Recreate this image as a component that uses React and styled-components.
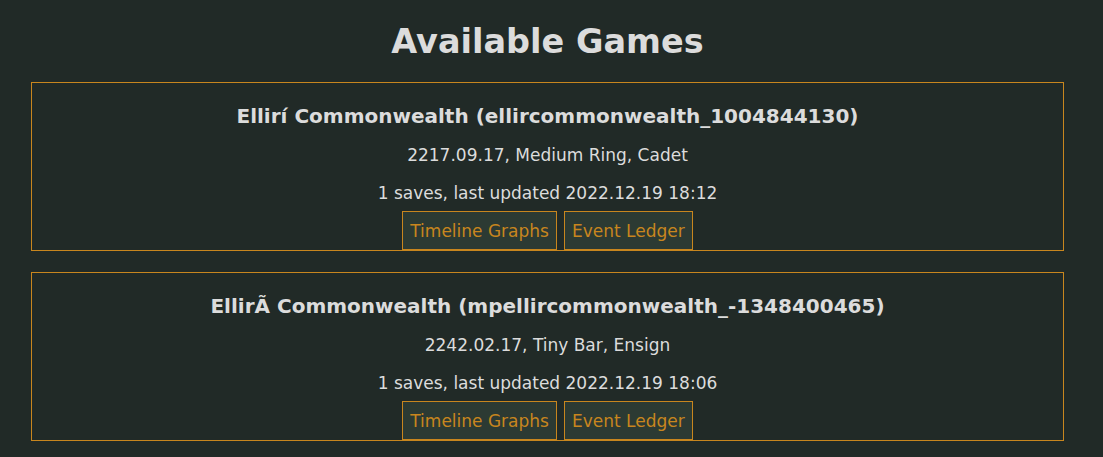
import React from "react";
import styled, { createGlobalStyle } from "styled-components";

const Global = createGlobalStyle`
  html, body { margin: 0; padding: 0; background: #212a27; }
  body { font-family: "DejaVu Sans", Verdana, sans-serif; color: #dcdcdc; }
`;

const Page = styled.div`
  padding: 0 39px 0 31px;
`;

const Title = styled.h1`
  margin: 0;
  padding: 22px 0 20px;
  text-align: center;
  font-family: "DejaVu Sans", Verdana, sans-serif;
  font-weight: bold;
  font-size: 33.5px;
  line-height: 40px;
  color: #dcdcdc;
`;

const List = styled.div`
  display: flex;
  flex-direction: column;
  gap: 21px;
`;

const Card = styled.div`
  border: 1px solid #c8861e;
  box-sizing: border-box;
  height: 169px;
  display: flex;
  flex-direction: column;
  align-items: center;
  padding-top: 20px;
`;

const CardTitle = styled.h2`
  margin: 0;
  font-size: 20px;
  line-height: 26px;
  font-weight: bold;
`;

const Info = styled.p`
  margin: ${(p) => p.$top}px 0 0;
  font-size: 17px;
  line-height: 20px;
`;

const Buttons = styled.div`
  display: flex;
  gap: 7px;
  margin-top: 8px;
`;

const Button = styled.button`
  font-family: inherit;
  font-size: 17px;
  color: #c8861e;
  background: #2c3a33;
  border: 1px solid #c8861e;
  height: 39px;
  padding: 0 7px;
  cursor: pointer;
`;

const games = [
  {
    name: "Ellirí Commonwealth (ellircommonwealth_1004844130)",
    info: "2217.09.17, Medium Ring, Cadet",
    saves: "1 saves, last updated 2022.12.19 18:12",
  },
  {
    name: "EllirÃ Commonwealth (mpellircommonwealth_-1348400465)",
    info: "2242.02.17, Tiny Bar, Ensign",
    saves: "1 saves, last updated 2022.12.19 18:06",
  },
];

export default function App() {
  return (
    <Page>
      <Global />
      <Title>Available Games</Title>
      <List>
        {games.map((g) => (
          <Card key={g.name}>
            <CardTitle>{g.name}</CardTitle>
            <Info $top={16}>{g.info}</Info>
            <Info $top={18}>{g.saves}</Info>
            <Buttons>
              <Button>Timeline Graphs</Button>
              <Button>Event Ledger</Button>
            </Buttons>
          </Card>
        ))}
      </List>
    </Page>
  );
}
